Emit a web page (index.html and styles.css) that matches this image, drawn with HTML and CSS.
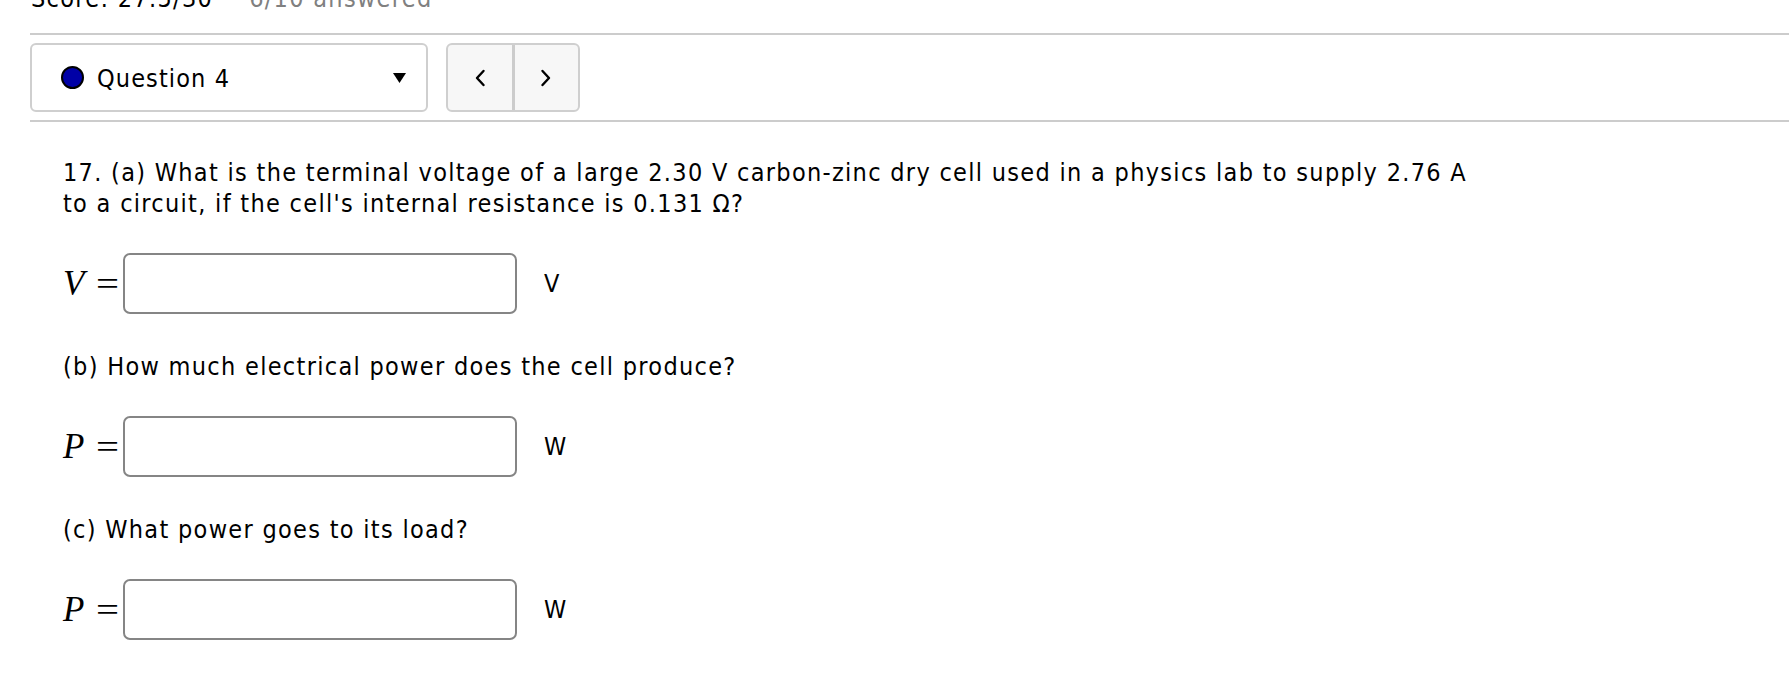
FILE: index.html
```html
<!DOCTYPE html>
<html>
<head>
<meta charset="utf-8">
<link rel="stylesheet" href="styles.css">
</head>
<body>
<div class="page">
  <div class="score-row">
    <span class="score">Score: 27.5/30</span>
    <span class="answered">6/10 answered</span>
  </div>
  <div class="rule"></div>
  <div class="toolbar">
    <div class="select">
      <span class="dot"></span>
      <span class="select-label">Question 4</span>
      <svg class="caret" width="13" height="10" viewBox="0 0 13 10"><path d="M0 0 H13 L6.5 10 Z" fill="#000"/></svg>
    </div>
    <div class="nav">
      <button class="nav-btn" aria-label="Previous">
        <svg width="12" height="20" viewBox="0 0 12 20"><path d="M9.5 3 L3 10 L9.5 17" fill="none" stroke="#000" stroke-width="2.4" stroke-linecap="round" stroke-linejoin="round"/></svg>
      </button>
      <button class="nav-btn nav-next" aria-label="Next">
        <svg width="12" height="20" viewBox="0 0 12 20"><path d="M2.5 3 L9 10 L2.5 17" fill="none" stroke="#000" stroke-width="2.4" stroke-linecap="round" stroke-linejoin="round"/></svg>
      </button>
    </div>
  </div>
  <div class="rule"></div>

  <div class="question">
    <p class="text">17. (a) What is the terminal voltage of a large 2.30 V carbon-zinc dry cell used in a physics lab to supply 2.76 A<br>to a circuit, if the cell's internal resistance is 0.131 Ω?</p>
    <div class="answer">
      <span class="math"><span class="var">V</span><span class="eq">=</span></span>
      <span class="box"></span>
      <span class="unit">V</span>
    </div>
    <p class="text">(b) How much electrical power does the cell produce?</p>
    <div class="answer">
      <span class="math"><span class="var">P</span><span class="eq">=</span></span>
      <span class="box"></span>
      <span class="unit">W</span>
    </div>
    <p class="text">(c) What power goes to its load?</p>
    <div class="answer">
      <span class="math"><span class="var">P</span><span class="eq">=</span></span>
      <span class="box"></span>
      <span class="unit">W</span>
    </div>
  </div>
</div>
</body>
</html>
```

FILE: styles.css
```css
html, body {
  margin: 0;
  padding: 0;
  background: #fff;
}
body {
  font-family: "DejaVu Sans Condensed", "DejaVu Sans", sans-serif;
  font-stretch: condensed;
  color: #000;
  overflow: hidden;
  letter-spacing: 1.3px;
}
.page {
  padding-left: 30px;
}
.score-row {
  margin-top: -16px;
  height: 30px;
  line-height: 30px;
  font-size: 25px;
  display: flex;
  gap: 36px;
  padding-left: 1px;
}
.score { color: #000; }
.answered { color: #808080; }
.rule {
  height: 2px;
  background: #cccccc;
}
.score-row + .rule { margin-top: 19px; }
.toolbar {
  display: flex;
  align-items: stretch;
  gap: 18px;
  margin: 8px 0;
  height: 69px;
}
.select {
  box-sizing: border-box;
  width: 398px;
  border: 2px solid #cfcfcf;
  border-radius: 6px;
  display: flex;
  align-items: center;
  padding: 0 20px 0 29px;
  background: #fff;
}
.dot {
  box-sizing: border-box;
  width: 23px;
  height: 23px;
  border-radius: 50%;
  background: #0000a6;
  border: 2px solid #000;
  flex: none;
}
.select-label {
  font-size: 25px;
  letter-spacing: 1.1px;
  margin-left: 13px;
  padding-top: 2px;
  flex: 1;
}
.caret { flex: none; margin-right: 0; }
.nav {
  box-sizing: border-box;
  display: flex;
  width: 134px;
  border: 2px solid #cfcfcf;
  border-radius: 6px;
  background: #f7f7f7;
  overflow: hidden;
}
.nav-btn {
  flex: 1;
  border: none;
  background: transparent;
  padding: 0;
  display: flex;
  align-items: center;
  justify-content: center;
}
.nav-next {
  border-left: 3px solid #cccccc;
}
.question {
  padding-left: 33px;
  padding-top: 33px;
}
.text {
  margin: 0;
  padding-top: 2px;
  font-size: 25px;
  line-height: 31px;
}
.answer {
  display: flex;
  align-items: center;
  height: 61px;
  margin: 34px 0 35px;
}
.math {
  font-family: "Liberation Serif", "DejaVu Serif", serif;
  font-stretch: normal;
  letter-spacing: 0;
  font-size: 35px;
  display: flex;
  align-items: center;
  width: 60px;
}
.var {
  font-style: italic;
  width: 33px;
}
.eq {
  font-size: 34px;
  display: inline-block;
  transform: scaleX(1.2);
  transform-origin: left center;
}
.box {
  box-sizing: border-box;
  width: 394px;
  height: 61px;
  border: 2px solid #858585;
  border-radius: 7px;
  background: #fff;
}
.unit {
  font-size: 25px;
  margin-left: 27px;
}
```
